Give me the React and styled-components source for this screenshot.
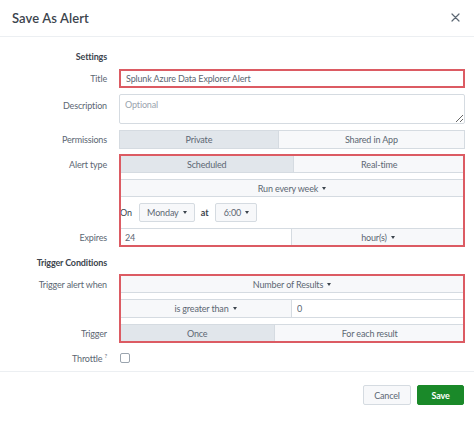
import React from 'react';
import styled, { createGlobalStyle, css } from 'styled-components';

const GlobalStyle = createGlobalStyle`
  html, body {
    margin: 0;
    padding: 0;
    background: #fff;
  }
  body {
    font-family: Lato, "Liberation Sans", sans-serif;
    color: #3c444d;
  }
  * {
    box-sizing: border-box;
  }
`;

const small = css`
  font-size: 9px;
  letter-spacing: -0.15px;
`;

const Modal = styled.div`
  width: 474px;
  height: 425px;
  display: flex;
  flex-direction: column;
  background: #fff;
`;

const Header = styled.div`
  height: 37px;
  display: flex;
  align-items: center;
  justify-content: space-between;
  padding: 0 12px 1px 12px;
  border-bottom: 1px solid #eceff2;
`;

const ModalTitle = styled.h2`
  margin: 0;
  font-size: 13px;
  font-weight: 600;
  color: #3c444d;
  letter-spacing: 0.1px;
`;

const CloseButton = styled.button`
  border: 0;
  background: none;
  padding: 0;
  width: 10px;
  height: 10px;
  display: flex;
  align-items: center;
  justify-content: center;
  margin-right: 2px;
`;

const Body = styled.div`
  flex: 1;
  display: flex;
  flex-direction: column;
  gap: 6px;
  padding: 13px 9px 0 0;
  border-bottom: 1px solid #eceff2;
`;

const Row = styled.div`
  display: grid;
  grid-template-columns: 107px 1fr;
  column-gap: 12px;
  align-items: ${(p) => (p.$top ? 'start' : 'center')};
  height: ${(p) => p.$h || 19}px;
  ${(p) =>
    p.$mt &&
    css`
      margin-top: ${p.$mt}px;
    `}
`;

const Label = styled.div`
  ${small}
  text-align: right;
  color: #5c6773;
  white-space: nowrap;
  ${(p) =>
    p.$top &&
    css`
      padding-top: 6px;
    `}

  sup {
    font-size: 6px;
    margin-left: 2px;
  }
`;

const Heading = styled.div`
  ${small}
  text-align: right;
  font-weight: 700;
  color: #3c444d;
  white-space: nowrap;
`;

/* Red annotation frame drawn over a group of rows */
const Highlight = styled.div`
  position: relative;
  display: flex;
  flex-direction: column;
  gap: 6px;

  &::after {
    content: '';
    position: absolute;
    top: -1px;
    bottom: -1px;
    left: 119px;
    right: 0;
    border: 2px solid #dc5b63;
    pointer-events: none;
  }
`;

const TextInput = styled.input`
  ${small}
  width: 100%;
  height: 100%;
  margin: 0;
  padding: 0 5px;
  font-family: inherit;
  color: #5c6773;
  background: #fff;
  border: 1px solid #d5dbe1;
  border-radius: ${(p) => (p.$flat ? 0 : 2)}px;
  outline: none;

  ${(p) =>
    p.$alert &&
    css`
      border: 2px solid #dc5b63;
      border-radius: 0;
    `}
`;

const TextArea = styled.textarea`
  ${small}
  width: 100%;
  height: 30px;
  margin: 0;
  padding: 4px 5px;
  font-family: inherit;
  color: #5c6773;
  border: 1px solid #d5dbe1;
  border-radius: 2px;
  outline: none;
  resize: vertical;

  &::placeholder {
    color: #9aa4ae;
  }
`;

const Segmented = styled.div`
  display: flex;
  height: 100%;
`;

const Segment = styled.div`
  ${small}
  flex: 0 0 ${(p) => p.$basis || 'auto'};
  flex-grow: ${(p) => (p.$basis ? 0 : 1)};
  display: flex;
  align-items: center;
  justify-content: center;
  color: #5c6773;
  border: 1px solid #d5dbe1;
  background: ${(p) => (p.$active ? '#e1e6eb' : '#f7f8fa')};
  & + & {
    border-left: 0;
  }
`;

const Caret = styled.span`
  display: inline-block;
  width: 0;
  height: 0;
  margin-left: 4px;
  border-left: 2.5px solid transparent;
  border-right: 2.5px solid transparent;
  border-top: 3px solid #3c444d;
  vertical-align: middle;
`;

const Dropdown = styled.div`
  ${small}
  display: flex;
  align-items: center;
  justify-content: center;
  height: 100%;
  color: #5c6773;
  background: #f7f8fa;
  border: 1px solid #d5dbe1;
  ${(p) =>
    p.$basis &&
    css`
      flex: 0 0 ${p.$basis};
    `}
  ${(p) =>
    p.$grow &&
    css`
      flex: 1;
    `}
`;

const Pair = styled.div`
  display: flex;
  height: 100%;

  & > * + * {
    border-left: 0;
  }
`;

const Schedule = styled.div`
  ${small}
  display: flex;
  align-items: center;
  height: 100%;
  color: #3c444d;
`;

const Word = styled.span`
  font-weight: ${(p) => (p.$bold ? 700 : 400)};
  margin: 0 ${(p) => p.$mr || 6}px 0 ${(p) => p.$ml || 1}px;
`;

const SmallSelect = styled.div`
  display: flex;
  align-items: center;
  justify-content: center;
  width: ${(p) => p.$w}px;
  height: 19px;
  color: #5c6773;
  background: #f7f8fa;
  border: 1px solid #d5dbe1;
  border-radius: 2px;
`;

const Checkbox = styled.span`
  display: block;
  width: 10px;
  height: 10px;
  margin-left: 1px;
  border: 1px solid #9aa4ae;
  border-radius: 2px;
  background: #fff;
`;

const Footer = styled.div`
  display: flex;
  justify-content: flex-end;
  align-items: flex-start;
  gap: 6px;
  padding: 13px 10px 20px 0;
`;

const Button = styled.button`
  ${small}
  height: 20px;
  width: ${(p) => p.$w}px;
  padding: 0;
  font-family: inherit;
  border-radius: 2px;
  cursor: pointer;
  ${(p) =>
    p.$primary
      ? css`
          color: #fff;
          font-weight: 700;
          background: #1a8929;
          border: 1px solid #1a8929;
        `
      : css`
          color: #5c6773;
          background: #f7f8fa;
          border: 1px solid #d5dbe1;
        `}
`;

const CloseIcon = () => (
  <svg width="9" height="9" viewBox="0 0 9 9">
    <path d="M1 1 L8 8 M8 1 L1 8" stroke="#5c6773" strokeWidth="1.2" strokeLinecap="round" />
  </svg>
);

export default function App() {
  return (
    <>
      <GlobalStyle />
      <Modal>
        <Header>
          <ModalTitle>Save As Alert</ModalTitle>
          <CloseButton aria-label="Close">
            <CloseIcon />
          </CloseButton>
        </Header>

        <Body>
          <Row $h={13}>
            <Heading>Settings</Heading>
          </Row>
          <Row>
            <Label>Title</Label>
            <TextInput $alert readOnly value="Splunk Azure Data Explorer Alert" />
          </Row>
          <Row $h={30} $top>
            <Label $top>Description</Label>
            <TextArea placeholder="Optional" />
          </Row>
          <Row>
            <Label>Permissions</Label>
            <Segmented>
              <Segment $active $basis="46.2%">Private</Segment>
              <Segment>Shared in App</Segment>
            </Segmented>
          </Row>

          <Highlight>
            <Row $h={18}>
              <Label>Alert type</Label>
              <Segmented>
                <Segment $active $basis="50.7%">Scheduled</Segment>
                <Segment>Real-time</Segment>
              </Segmented>
            </Row>
            <Row $h={18}>
              <span />
              <Dropdown>
                Run every week <Caret />
              </Dropdown>
            </Row>
            <Row>
              <span />
              <Schedule>
                <Word $mr={7}>On</Word>
                <SmallSelect $w={56}>
                  Monday <Caret />
                </SmallSelect>
                <Word $bold $ml={6} $mr={7}>at</Word>
                <SmallSelect $w={42}>
                  6:00 <Caret />
                </SmallSelect>
              </Schedule>
            </Row>
            <Row $h={18}>
              <Label>Expires</Label>
              <Pair>
                <TextInput $flat readOnly value="24" style={{ flex: '0 0 50%' }} />
                <Dropdown $grow>
                  hour(s) <Caret />
                </Dropdown>
              </Pair>
            </Row>
          </Highlight>

          <Row $h={13} $mt={4}>
            <Heading>Trigger Conditions</Heading>
          </Row>

          <Highlight>
            <Row $h={18}>
              <Label>Trigger alert when</Label>
              <Dropdown>
                Number of Results <Caret />
              </Dropdown>
            </Row>
            <Row>
              <span />
              <Pair>
                <Dropdown $basis="50%">
                  is greater than <Caret />
                </Dropdown>
                <TextInput $flat readOnly value="0" />
              </Pair>
            </Row>
            <Row $h={18}>
              <Label>Trigger</Label>
              <Segmented>
                <Segment $active $basis="45.2%">Once</Segment>
                <Segment>For each result</Segment>
              </Segmented>
            </Row>
          </Highlight>

          <Row $h={11} $mt={4}>
            <Label>
              Throttle<sup>?</sup>
            </Label>
            <Checkbox />
          </Row>
        </Body>

        <Footer>
          <Button $w={48}>Cancel</Button>
          <Button $primary $w={47}>Save</Button>
        </Footer>
      </Modal>
    </>
  );
}
